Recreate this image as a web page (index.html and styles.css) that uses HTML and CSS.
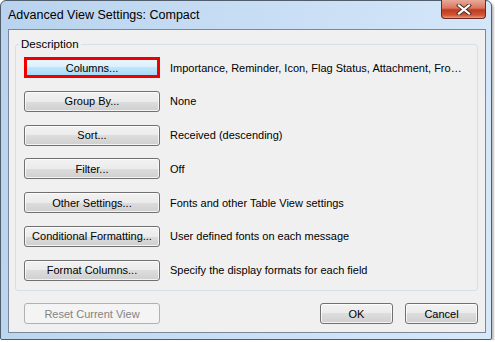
FILE: index.html
```html
<!DOCTYPE html>
<html>
<head>
<meta charset="utf-8">
<link rel="stylesheet" href="styles.css">
</head>
<body>
<div class="window">
  <div class="titlebar">
    <span class="title">Advanced View Settings: Compact</span>
    <div class="close">
      <svg width="16" height="11" viewBox="0 0 16 11"><path d="M3 1.5 L13 9.5 M13 1.5 L3 9.5" stroke="#4a2a20" stroke-width="4" stroke-linecap="square"/><path d="M3 1.5 L13 9.5 M13 1.5 L3 9.5" stroke="#fff" stroke-width="2.2" stroke-linecap="square"/></svg>
    </div>
  </div>
  <div class="client">
    <fieldset class="group">
      <legend>Description</legend>
      <div class="rows">
        <div class="row"><div class="highlight"><button class="btn hot">Columns...</button></div><span class="desc">Importance, Reminder, Icon, Flag Status, Attachment, Fro…</span></div>
        <div class="row"><button class="btn">Group By...</button><span class="desc">None</span></div>
        <div class="row"><button class="btn">Sort...</button><span class="desc">Received (descending)</span></div>
        <div class="row"><button class="btn">Filter...</button><span class="desc">Off</span></div>
        <div class="row"><button class="btn">Other Settings...</button><span class="desc">Fonts and other Table View settings</span></div>
        <div class="row"><button class="btn">Conditional Formatting...</button><span class="desc">User defined fonts on each message</span></div>
        <div class="row"><button class="btn">Format Columns...</button><span class="desc">Specify the display formats for each field</span></div>
      </div>
    </fieldset>
    <div class="footer">
      <button class="btn disabled">Reset Current View</button>
      <div class="spacer"></div>
      <button class="btn small">OK</button>
      <button class="btn small">Cancel</button>
    </div>
  </div>
</div>
</body>
</html>
```
FILE: styles.css
```css
html, body {
  margin: 0;
  padding: 0;
  background: #ffffff;
}
body {
  font-family: "Liberation Sans", Arial, sans-serif;
  font-size: 11px;
  color: #000;
}
.window {
  width: 490px;
  height: 338px;
  border: 1px solid #4f5d6c;
  border-radius: 6px 6px 2px 2px;
  background: linear-gradient(100deg, #b9d3ee 0%, #c7ddf4 45%, #d7e8fa 100%);
  box-shadow: 2px 2px 2px rgba(0,0,0,0.25);
  display: flex;
  flex-direction: column;
}
.titlebar {
  height: 28px;
  display: flex;
  align-items: flex-start;
  position: relative;
}
.title {
  font-family: "Liberation Sans", Arial, sans-serif;
  font-size: 12.5px;
  margin: 7px 0 0 7px;
  color: #000;
}
.close {
  position: absolute;
  right: 5px;
  top: -1px;
  width: 45px;
  height: 19px;
  box-sizing: border-box;
  border: 1px solid #6a2a20;
  border-top: none;
  border-radius: 0 0 4px 4px;
  background: linear-gradient(#e9a99a 0%, #d8765f 45%, #c2391c 55%, #d0583a 85%, #e69c84 100%);
  display: flex;
  align-items: center;
  justify-content: center;
}
.client {
  flex: 1;
  margin: 0 5px 6px 7px;
  border: 1px solid #7b8899;
  background: #f0f0f0;
  display: flex;
  flex-direction: column;
  padding: 8px 7px 0 6px;
}
.group {
  margin: 0;
  border: 1px solid #d5dfe5;
  border-radius: 3px;
  padding: 7px 8px 8px 8px;
  height: 253px;
  box-sizing: border-box;
}
.group legend {
  padding: 0 2px;
  margin-left: -5px;
  font-size: 11.5px;
}
.rows {
  display: flex;
  flex-direction: column;
  gap: 12.8px;
}
.row {
  display: flex;
  align-items: center;
  height: 21px;
}
.btn {
  font-family: "Liberation Sans", Arial, sans-serif;
  font-size: 11px;
  color: #000;
  width: 136px;
  height: 21px;
  border: 1px solid #707070;
  border-radius: 3px;
  background: linear-gradient(#f2f2f2 0%, #ebebeb 50%, #dddddd 50%, #cfcfcf 100%);
  box-shadow: inset 0 0 0 1px rgba(255,255,255,0.75);
  padding: 0;
  margin: 0;
  flex: none;
}
.highlight {
  width: 136px;
  height: 21px;
  box-sizing: border-box;
  border: 3px solid #ee0000;
  flex: none;
  display: flex;
}
.btn.hot {
  width: 130px;
  height: 15px;
  border: none;
  border-radius: 0;
  box-shadow: none;
  background: linear-gradient(#eaf6fd 0%, #d9f0fc 50%, #bee6fd 50%, #a7d9f5 100%);
}
.desc {
  margin-left: 10px;
  white-space: nowrap;
}
.footer {
  display: flex;
  align-items: center;
  margin-top: 12px;
  padding-left: 9px;
  gap: 12px;
}
.spacer {
  flex: 1;
}
.btn.small {
  width: 73px;
}
.btn.disabled {
  color: #838383;
  border-color: #adb2b5;
  background: #f4f4f4;
  box-shadow: none;
}
```
